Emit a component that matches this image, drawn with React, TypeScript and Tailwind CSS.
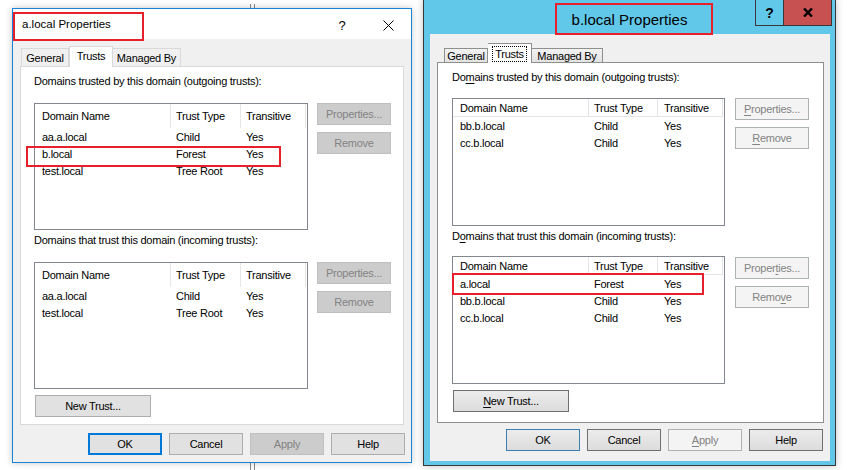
import * as React from "react";

type Trust = { name: string; type: string; transitive: string };

const A_OUT: Trust[] = [
  { name: "aa.a.local", type: "Child", transitive: "Yes" },
  { name: "b.local", type: "Forest", transitive: "Yes" },
  { name: "test.local", type: "Tree Root", transitive: "Yes" },
];
const A_IN: Trust[] = [
  { name: "aa.a.local", type: "Child", transitive: "Yes" },
  { name: "test.local", type: "Tree Root", transitive: "Yes" },
];
const B_OUT: Trust[] = [
  { name: "bb.b.local", type: "Child", transitive: "Yes" },
  { name: "cc.b.local", type: "Child", transitive: "Yes" },
];
const B_IN: Trust[] = [
  { name: "a.local", type: "Forest", transitive: "Yes" },
  { name: "bb.b.local", type: "Child", transitive: "Yes" },
  { name: "cc.b.local", type: "Child", transitive: "Yes" },
];

// underline one letter (access key)
function Key({ text, at }: { text: string; at: number }) {
  return (
    <>
      {text.slice(0, at)}
      <span className="underline underline-offset-2">{text[at]}</span>
      {text.slice(at + 1)}
    </>
  );
}

// --- Windows 10 dialog ---

function Btn10({
  children,
  disabled,
  focused,
  className = "",
}: {
  children: React.ReactNode;
  disabled?: boolean;
  focused?: boolean;
  className?: string;
}) {
  let look = "border border-[#adadad] bg-[#e1e1e1] text-black";
  if (disabled) look = "border border-[#bfbfbf] bg-[#cccccc] text-[#838383]";
  if (focused) look = "border-2 border-[#0078d7] bg-[#e1e1e1] text-black";
  return (
    <button type="button" className={`flex h-[22px] items-center justify-center pt-px ${look} ${className}`}>
      {children}
    </button>
  );
}

function List10({ rows }: { rows: Trust[] }) {
  return (
    <div className="h-[127px] w-[274px] border border-[#828790] bg-white">
      <div className="flex h-[24px]">
        <div className="flex w-[136px] items-center border-r border-[#e5e5e5] pl-[7px] pt-px">Domain Name</div>
        <div className="flex w-[70px] items-center border-r border-[#e5e5e5] pl-[5px] pt-px">Trust Type</div>
        <div className="flex w-[65px] items-center border-r border-[#e5e5e5] pl-[5px] pt-px">Transitive</div>
      </div>
      {rows.map((r) => (
        <div key={r.name} className="flex h-[17px] items-center pt-[2px]">
          <div className="w-[136px] pl-[7px]">{r.name}</div>
          <div className="w-[70px] pl-[5px]">{r.type}</div>
          <div className="w-[65px] pl-[5px]">{r.transitive}</div>
        </div>
      ))}
    </div>
  );
}

function Section10({ label, rows, first }: { label: string; rows: Trust[]; first?: boolean }) {
  return (
    <>
      <div className={`h-[14px] pt-px leading-[14px] ${first ? "" : "mt-[2px]"}`}>{label}</div>
      <div className="mt-[16px] flex gap-[9px]">
        <List10 rows={rows} />
        <div className="flex w-[74px] flex-col gap-[7px]">
          <Btn10 disabled>Properties...</Btn10>
          <Btn10 disabled>Remove</Btn10>
        </div>
      </div>
    </>
  );
}

function Win10Dialog() {
  return (
    <div className="absolute left-[12px] top-[8px] flex h-[455px] w-[400px] flex-col border border-[#1883d7] bg-[#f0f0f0] shadow-[0_0_7px_rgba(0,0,0,0.22)]">
      <div className="flex h-[30px] items-center bg-white pt-[2px]">
        <span className="flex-1 pl-[9px] text-[11.5px] tracking-normal">a.local Properties</span>
        <span className="flex w-[46px] justify-center text-[13px] tracking-normal">?</span>
        <span className="flex w-[46px] justify-center">
          <svg width="11" height="11" viewBox="0 0 11 11">
            <path d="M0.5 0.5 L10.5 10.5 M10.5 0.5 L0.5 10.5" stroke="#000" strokeWidth="1" />
          </svg>
        </span>
      </div>

      <div className="flex flex-col px-[7px] pt-[7px]">
        <div className="flex h-[20px] items-end pl-[1px]">
          <div className="flex h-[18px] w-[48px] items-center justify-center border border-b-0 border-[#d9d9d9] pt-px">General</div>
          <div className="relative top-[1px] z-10 flex h-[21px] w-[44px] items-center justify-center border border-b-0 border-[#d9d9d9] bg-white pb-[2px]">
            Trusts
          </div>
          <div className="flex h-[18px] w-[68px] items-center justify-center border border-b-0 border-l-0 border-[#d9d9d9] pt-px">Managed By</div>
        </div>

        <div className="flex h-[359px] w-[384px] flex-col border border-[#d9d9d9] bg-white pl-[13px] pt-[6px]">
          <Section10 first label="Domains trusted by this domain (outgoing trusts):" rows={A_OUT} />
          <Section10 label="Domains that trust this domain (incoming trusts):" rows={A_IN} />
          <Btn10 className="ml-[1px] mt-[6px] w-[116px]">New Trust...</Btn10>
        </div>

        <div className="mr-[-1px] mt-[8px] flex justify-end gap-[7px]">
          <Btn10 focused className="w-[74px]">OK</Btn10>
          <Btn10 className="w-[74px]">Cancel</Btn10>
          <Btn10 disabled className="w-[74px]">Apply</Btn10>
          <Btn10 className="w-[74px]">Help</Btn10>
        </div>
      </div>
    </div>
  );
}

// --- Windows 8 dialog ---

function Btn8({
  children,
  disabled,
  focused,
  className = "",
}: {
  children: React.ReactNode;
  disabled?: boolean;
  focused?: boolean;
  className?: string;
}) {
  let look = "border border-[#707070] bg-gradient-to-b from-[#ececec] to-[#dcdcdc] text-black";
  if (disabled) look = "border border-[#adb2b5] bg-[#f4f4f4] text-[#838383]";
  if (focused) look = "border border-[#3c7fb1] bg-gradient-to-b from-[#ececec] to-[#dcdcdc] text-black";
  return (
    <button type="button" className={`flex h-[22px] items-center justify-center pt-px ${look} ${className}`}>
      {children}
    </button>
  );
}

function List8({ rows }: { rows: Trust[] }) {
  return (
    <div className="h-[128px] w-[273px] border border-[#828790] bg-white">
      <div className="flex h-[18px]">
        <div className="flex w-[136px] items-center border-b border-r border-[#e5e5e5] pl-[7px] pt-px">Domain Name</div>
        <div className="flex w-[69px] items-center border-b border-r border-[#e5e5e5] pl-[5px] pt-px">Trust Type</div>
        <div className="flex w-[65px] items-center border-b border-r border-[#e5e5e5] pl-[6px] pt-px">Transitive</div>
      </div>
      {rows.map((r) => (
        <div key={r.name} className="flex h-[17px] items-center pt-[2px]">
          <div className="w-[136px] pl-[7px]">{r.name}</div>
          <div className="w-[69px] pl-[5px]">{r.type}</div>
          <div className="w-[65px] pl-[6px]">{r.transitive}</div>
        </div>
      ))}
    </div>
  );
}

function Win8Dialog() {
  return (
    <div className="absolute left-[423px] top-[-1px] flex h-[467px] w-[413px] flex-col border border-[#383838] bg-[#62c8ea] shadow-[0_0_7px_rgba(0,0,0,0.25)]">
      <div className="relative flex h-[34px] items-center justify-center pt-[4px] text-[15px] tracking-normal">
        b.local Properties
        <div className="absolute right-[3px] top-[-1px] flex h-[27px]">
          <div className="flex w-[29px] items-center justify-center border border-[#383838] text-[14px] font-bold">?</div>
          <div className="flex w-[48px] items-center justify-center border border-l-0 border-[#383838] bg-[#c75050]">
            <svg width="10" height="9" viewBox="0 0 10 9">
              <path d="M1 0.5 L9 8.5 M9 0.5 L1 8.5" stroke="#000" strokeWidth="2.4" />
            </svg>
          </div>
        </div>
      </div>

      <div className="mb-[4px] ml-[6px] mr-[5px] flex flex-1 flex-col bg-[#f0f0f0] pl-[7px] pt-[14px]">
        <div className="flex h-[14px] items-end pl-[7px]">
          <div className="flex h-[14px] w-[44px] items-center justify-center border border-b-0 border-[#8e8f8f] bg-gradient-to-b from-[#f2f2f2] to-[#e3e3e3] pt-px">
            General
          </div>
          <div className="relative top-[1px] z-10 flex h-[20px] w-[44px] items-center justify-center border border-b-0 border-l-0 border-[#8e8f8f] bg-white">
            <span className="border border-dotted border-black px-[2px] pt-px leading-[13px]">Trusts</span>
          </div>
          <div className="flex h-[14px] w-[71px] items-center justify-center border border-b-0 border-l-0 border-[#8e8f8f] bg-gradient-to-b from-[#f2f2f2] to-[#e3e3e3] pt-px">
            Managed By
          </div>
        </div>

        <div className="flex h-[361px] w-[387px] flex-col border border-[#8e8f8f] bg-white pl-[14px] pt-[6px]">
          <div className="h-[14px] pt-px leading-[14px]">
            <Key text="Domains trusted by this domain (outgoing trusts):" at={2} />
          </div>
          <div className="mt-[15px] flex gap-[10px]">
            <List8 rows={B_OUT} />
            <div className="flex w-[74px] flex-col gap-[7px]">
              <Btn8 disabled>
                <Key text="Properties..." at={0} />
              </Btn8>
              <Btn8 disabled>
                <Key text="Remove" at={0} />
              </Btn8>
            </div>
          </div>

          <div className="mt-[2px] h-[14px] pt-px leading-[14px]">
            <Key text="Domains that trust this domain (incoming trusts):" at={1} />
          </div>
          <div className="mt-[14px] flex gap-[10px]">
            <List8 rows={B_IN} />
            <div className="mt-[1px] flex w-[74px] flex-col gap-[7px]">
              <Btn8 disabled>
                <Key text="Properties..." at={6} />
              </Btn8>
              <Btn8 disabled>
                <Key text="Remove" at={4} />
              </Btn8>
            </div>
          </div>

          <Btn8 className="ml-[1px] mt-[6px] w-[116px]">
            <Key text="New Trust..." at={0} />
          </Btn8>
        </div>

        <div className="mt-[6px] flex justify-end gap-[7px] pr-[7px]">
          <Btn8 focused className="w-[74px]">OK</Btn8>
          <Btn8 className="w-[74px]">Cancel</Btn8>
          <Btn8 disabled className="w-[74px]">
            <Key text="Apply" at={0} />
          </Btn8>
          <Btn8 className="w-[74px]">Help</Btn8>
        </div>
      </div>
    </div>
  );
}

export default function App() {
  return (
    <div className="relative h-[470px] w-[847px] overflow-hidden bg-white font-['Liberation_Sans',Arial,sans-serif] text-[11px] leading-none tracking-[-0.25px] text-black">
      {/* splitter handle peeking out behind the first window */}
      <div className="absolute left-[250px] top-[4px] h-[4px] w-[1px] bg-[#8a8a8a]" />
      <div className="absolute left-[254px] top-[4px] h-[4px] w-[1px] bg-[#8a8a8a]" />
      <div className="absolute left-[250px] top-[463px] h-[7px] w-[1px] bg-[#8a8a8a]" />
      <div className="absolute left-[254px] top-[463px] h-[7px] w-[1px] bg-[#8a8a8a]" />

      <Win10Dialog />
      <Win8Dialog />

      {/* red annotation boxes */}
      <div className="absolute left-[13px] top-[12px] h-[29px] w-[131px] border-2 border-[#e8202c]" />
      <div className="absolute left-[26px] top-[146px] h-[21px] w-[255px] border-2 border-[#e8202c]" />
      <div className="absolute left-[555px] top-[3px] h-[32px] w-[158px] border-2 border-[#e8202c]" />
      <div className="absolute left-[452px] top-[273px] h-[22px] w-[252px] border-2 border-[#e8202c]" />
    </div>
  );
}
